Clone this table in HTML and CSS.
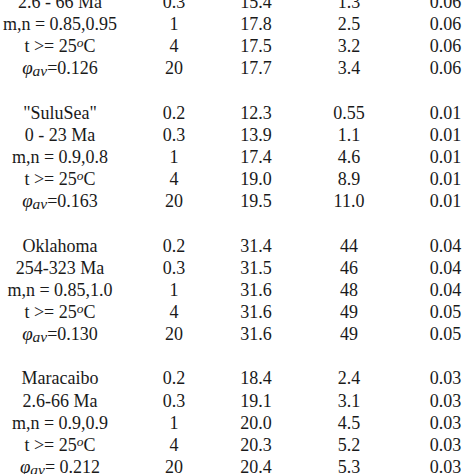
FILE: index.html
```html
<!DOCTYPE html>
<html>
<head>
<meta charset="utf-8">
<link rel="stylesheet" href="styles.css">
</head>
<body>
<div class="table">
  <div class="group">
    <div class="row"><span>2.6 - 66 Ma</span><span>0.3</span><span>15.4</span><span>1.3</span><span>0.06</span></div>
    <div class="row"><span>m,n = 0.85,0.95</span><span>1</span><span>17.8</span><span>2.5</span><span>0.06</span></div>
    <div class="row"><span>t &gt;= 25<sup>o</sup>C</span><span>4</span><span>17.5</span><span>3.2</span><span>0.06</span></div>
    <div class="row"><span><i class="phi">φ<sub>av</sub></i>=0.126</span><span>20</span><span>17.7</span><span>3.4</span><span>0.06</span></div>
  </div>
  <div class="group">
    <div class="row"><span>"SuluSea"</span><span>0.2</span><span>12.3</span><span>0.55</span><span>0.01</span></div>
    <div class="row"><span>0 - 23 Ma</span><span>0.3</span><span>13.9</span><span>1.1</span><span>0.01</span></div>
    <div class="row"><span>m,n = 0.9,0.8</span><span>1</span><span>17.4</span><span>4.6</span><span>0.01</span></div>
    <div class="row"><span>t &gt;= 25<sup>o</sup>C</span><span>4</span><span>19.0</span><span>8.9</span><span>0.01</span></div>
    <div class="row"><span><i class="phi">φ<sub>av</sub></i>=0.163</span><span>20</span><span>19.5</span><span>11.0</span><span>0.01</span></div>
  </div>
  <div class="group">
    <div class="row"><span>Oklahoma</span><span>0.2</span><span>31.4</span><span>44</span><span>0.04</span></div>
    <div class="row"><span>254-323 Ma</span><span>0.3</span><span>31.5</span><span>46</span><span>0.04</span></div>
    <div class="row"><span>m,n = 0.85,1.0</span><span>1</span><span>31.6</span><span>48</span><span>0.04</span></div>
    <div class="row"><span>t &gt;= 25<sup>o</sup>C</span><span>4</span><span>31.6</span><span>49</span><span>0.05</span></div>
    <div class="row"><span><i class="phi">φ<sub>av</sub></i>=0.130</span><span>20</span><span>31.6</span><span>49</span><span>0.05</span></div>
  </div>
  <div class="group">
    <div class="row"><span>Maracaibo</span><span>0.2</span><span>18.4</span><span>2.4</span><span>0.03</span></div>
    <div class="row"><span>2.6-66 Ma</span><span>0.3</span><span>19.1</span><span>3.1</span><span>0.03</span></div>
    <div class="row"><span>m,n = 0.9,0.9</span><span>1</span><span>20.0</span><span>4.5</span><span>0.03</span></div>
    <div class="row"><span>t &gt;= 25<sup>o</sup>C</span><span>4</span><span>20.3</span><span>5.2</span><span>0.03</span></div>
    <div class="row"><span><i class="phi">φ<sub>av</sub></i>= 0.212</span><span>20</span><span>20.4</span><span>5.3</span><span>0.03</span></div>
  </div>
</div>
</body>
</html>
```

FILE: styles.css
```css
html, body {
  margin: 0;
  padding: 0;
  background: #ffffff;
}
body {
  width: 474px;
  height: 474px;
  overflow: hidden;
  font-family: "Liberation Serif", "Times New Roman", serif;
  font-size: 18px;
  color: #1a1a1a;
}
.table {
  margin-top: -9px;
  display: flex;
  flex-direction: column;
  gap: 22.15px;
}
.row {
  display: grid;
  grid-template-columns: 120px 108px 56px 130px 63px;
  height: 22.15px;
  line-height: 22.15px;
  white-space: nowrap;
}
.row span {
  text-align: center;
}
sup {
  font-size: 0.75em;
  font-style: italic;
  line-height: 0;
  vertical-align: 0.4em;
}
.phi {
  font-style: italic;
  font-size: 1.05em;
}
.phi sub {
  font-size: 0.82em;
  line-height: 0;
  vertical-align: -0.12em;
}
```
